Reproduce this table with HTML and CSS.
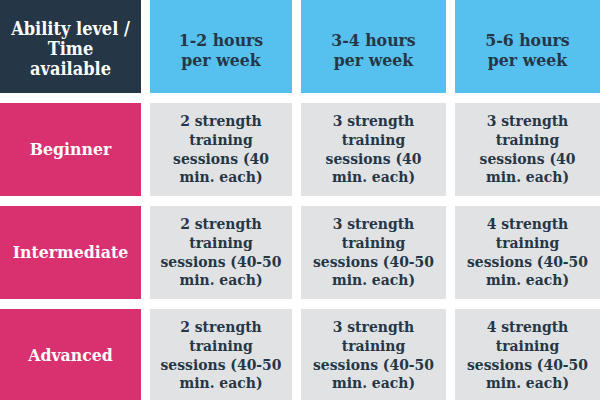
FILE: index.html
```html
<!DOCTYPE html>
<html lang="en">
<head>
    <meta charset="UTF-8">
    <meta name="viewport" content="width=device-width, initial-scale=1.0">
    <title>Training Plan</title>
    <link rel="stylesheet" href="styles.css">
</head>
<body>
    <div class="plan">
        <div class="cell corner"><span>Ability level / Time available</span></div>
        <div class="cell time"><span>1-2 hours<br>per week</span></div>
        <div class="cell time"><span>3-4 hours<br>per week</span></div>
        <div class="cell time"><span>5-6 hours<br>per week</span></div>

        <div class="cell level"><span>Beginner</span></div>
        <div class="cell info"><span>2 strength training sessions (40 min. each)</span></div>
        <div class="cell info"><span>3 strength training sessions (40 min. each)</span></div>
        <div class="cell info"><span>3 strength training sessions (40 min. each)</span></div>

        <div class="cell level"><span>Intermediate</span></div>
        <div class="cell info"><span>2 strength training sessions (40&#8209;50 min. each)</span></div>
        <div class="cell info"><span>3 strength training sessions (40&#8209;50 min. each)</span></div>
        <div class="cell info"><span>4 strength training sessions (40&#8209;50 min. each)</span></div>

        <div class="cell level"><span>Advanced</span></div>
        <div class="cell info"><span>2 strength training sessions (40&#8209;50 min. each)</span></div>
        <div class="cell info"><span>3 strength training sessions (40&#8209;50 min. each)</span></div>
        <div class="cell info"><span>4 strength training sessions (40&#8209;50 min. each)</span></div>
    </div>
</body>
</html>
```

FILE: styles.css
```css
body{
    margin: 0;
    padding: 0;
    background-color: white;
    font-family: "DejaVu Serif Condensed", "DejaVu Serif", serif;
    font-weight: bold;
}
.plan{
    width: 600px;
    display: grid;
    grid-template-columns: 141px 142px 145px minmax(0, 1fr);
    grid-auto-rows: 93px;
    row-gap: 10px;
    column-gap: 9px;
}
.cell{
    display: flex;
    align-items: center;
    justify-content: center;
    text-align: center;
    padding: 0 8px;
    color: #253746;
    font-size: 15.5px;
    line-height: 18.7px;
}
.corner{
    background-color: #253746;
    color: white;
    font-size: 18px;
    line-height: 20px;
    padding: 5px 8px 0;
}
.time{
    background-color: #56c1ef;
    font-size: 17.5px;
    line-height: 20px;
    padding-top: 6px;
}
.level{
    background-color: #d93070;
    color: white;
    font-size: 17.5px;
}
.info{
    background-color: #e1e2e4;
}
```
